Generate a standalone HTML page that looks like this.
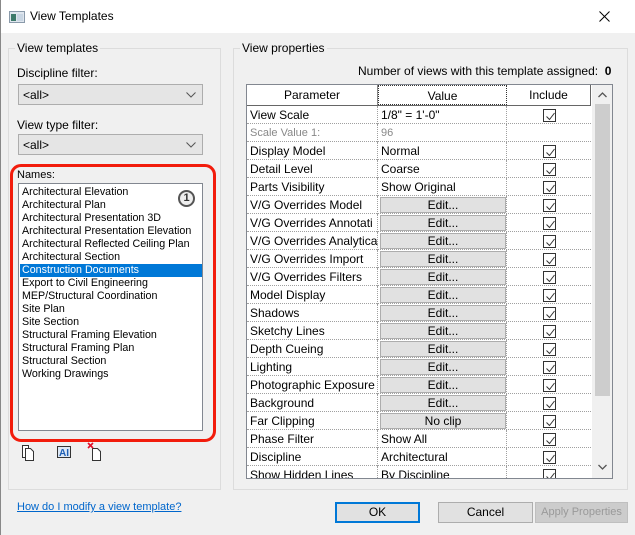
<!DOCTYPE html>
<html><head><style>
*{margin:0;padding:0;box-sizing:border-box}
body{width:635px;height:535px;background:#f0f0f0;font-family:"Liberation Sans",sans-serif;font-size:12px;color:#000;position:relative;overflow:hidden}
.a{position:absolute;white-space:nowrap}
.grp{position:absolute;border:1px solid #dcdcdc}
.lbl{position:absolute;background:#f0f0f0;padding:0 2px}
.combo{position:absolute;background:#e5e5e5;border:1px solid #adadad;height:21px;padding:3px 4px}
.combo svg{position:absolute;right:6px;top:7px}
.li{position:absolute;left:1px;height:13px;line-height:13px;font-size:10.7px;padding-left:2px;width:182px}
.row{position:absolute;left:0;height:18px;width:344px;border-bottom:1px dotted #a0a0a0}
.c{position:absolute;top:0;height:18px;line-height:18px;padding-left:3px}
.c1{left:0;width:131px;border-right:1px dotted #a0a0a0}
.c2{left:131px;width:129px;border-right:1px dotted #a0a0a0}
.c3{left:260px;width:84px}
.btn{position:absolute;left:2px;top:1px;width:126px;height:16px;background:#e1e1e1;border:1px solid #adadad;text-align:center;line-height:14px}
.cb{position:absolute;left:36px;top:3px;width:13px;height:13px;border:1px solid #333;background:#fff}
.cb svg{position:absolute;left:1px;top:1px}
.b{position:absolute;top:502px;height:21px;border:1px solid #adadad;background:#e1e1e1;text-align:center;line-height:19px}
</style></head><body>
<div class="a" style="left:0;top:0;width:635px;height:33px;background:#fff"></div>
<div class="a" style="left:0;top:0;width:1px;height:535px;background:#888"></div>
<svg class="a" style="left:9px;top:11px" width="16" height="12"><rect x="0.5" y="0.5" width="15" height="11" fill="#dfe6ee" stroke="#8a9aaa"/><rect x="2" y="3" width="5" height="7" fill="#3d7a6a"/><rect x="8" y="3" width="6" height="7" fill="#c9d6e3"/></svg>
<div class="a" style="left:30px;top:9px;font-size:12px">View Templates</div>
<svg class="a" style="left:599px;top:11px" width="11" height="11"><path d="M0.5 0.5L10.5 10.5M10.5 0.5L0.5 10.5" stroke="#000" stroke-width="1"/></svg>

<div class="grp" style="left:8px;top:48px;width:213px;height:442px"></div>
<div class="lbl" style="left:15px;top:41px">View templates</div>
<div class="a" style="left:17px;top:66px">Discipline filter:</div>
<div class="combo" style="left:18px;top:84px;width:185px">&lt;all&gt;<svg width="10" height="6"><path d="M0.5 0.5L5 5L9.5 0.5" stroke="#555" fill="none"/></svg></div>
<div class="a" style="left:17px;top:118px">View type filter:</div>
<div class="combo" style="left:18px;top:134px;width:185px">&lt;all&gt;<svg width="10" height="6"><path d="M0.5 0.5L5 5L9.5 0.5" stroke="#555" fill="none"/></svg></div>
<div class="a" style="left:10px;top:164px;width:206px;height:278px;border:3px solid #f21c0c;border-radius:11px"></div>
<div class="a" style="left:17px;top:169px;font-size:11px">Names:</div>
<div class="a" style="left:18px;top:183px;width:185px;height:248px;background:#fff;border:1px solid #828790">
<div class="li" style="top:2px">Architectural Elevation</div>
<div class="li" style="top:15px">Architectural Plan</div>
<div class="li" style="top:28px">Architectural Presentation 3D</div>
<div class="li" style="top:41px">Architectural Presentation Elevation</div>
<div class="li" style="top:54px">Architectural Reflected Ceiling Plan</div>
<div class="li" style="top:67px">Architectural Section</div>
<div class="li" style="top:80px;background:#0078d7;color:#fff">Construction Documents</div>
<div class="li" style="top:93px">Export to Civil Engineering</div>
<div class="li" style="top:106px">MEP/Structural Coordination</div>
<div class="li" style="top:119px">Site Plan</div>
<div class="li" style="top:132px">Site Section</div>
<div class="li" style="top:145px">Structural Framing Elevation</div>
<div class="li" style="top:158px">Structural Framing Plan</div>
<div class="li" style="top:171px">Structural Section</div>
<div class="li" style="top:184px">Working Drawings</div>
</div>
<div class="a" style="left:178px;top:190px;width:17px;height:17px;border:2px solid #555;border-radius:50%;background:#eee;text-align:center;line-height:13px;font-size:11px;font-weight:bold;color:#333">1</div>
<svg class="a" style="left:20px;top:444px" width="20" height="18"><path d="M2.5 1.5H8.5V13.5H2.5Z" fill="#fff" stroke="#333"/><path d="M5.5 4.5H10.5L13.5 7.5V16.5H5.5Z" fill="#fff" stroke="#333"/></svg>
<svg class="a" style="left:56px;top:444px" width="18" height="16"><rect x="1.5" y="2.5" width="13" height="11" fill="#dde8f5" stroke="#333"/><text x="3" y="12" font-family="Liberation Sans" font-size="10" font-weight="bold" fill="#1e5fb4">AI</text></svg>
<svg class="a" style="left:86px;top:442px" width="20" height="20"><path d="M6.5 6.5H11.5L14.5 9.5V18.5H6.5Z" fill="#fff" stroke="#333"/><path d="M2 1L7 6M7 1L2 6" stroke="#e0102a" stroke-width="1.6"/></svg>

<div class="grp" style="left:233px;top:48px;width:395px;height:442px"></div>
<div class="lbl" style="left:240px;top:41px">View properties</div>
<div class="a" style="left:358px;top:64px">Number of views with this template assigned: &nbsp;<b>0</b></div>
<div class="a" style="left:246px;top:84px;width:367px;height:395px;background:#fff;border:1px solid #828790;overflow:hidden">
<div class="a" style="left:0;top:0;width:344px;height:21px;background:#fff;border-bottom:1px solid #666">
<div class="a" style="left:0;top:0;width:131px;height:20px;border-right:1px solid #888;text-align:center;line-height:20px">Parameter</div>
<div class="a" style="left:131px;top:0;width:129px;height:20px;border:1px dotted #333;text-align:center;line-height:20px">Value</div>
<div class="a" style="left:260px;top:0;width:84px;height:20px;border-right:1px solid #666;text-align:center;line-height:20px">Include</div>
</div>
<div class="a" style="left:345px;top:0;width:21px;height:394px;background:#f0f0f0"></div>
<div class="a" style="left:348px;top:19px;width:15px;height:292px;background:#cdcdcd"></div>
<svg class="a" style="left:351px;top:7px" width="9" height="6"><path d="M0.5 5L4.5 1L8.5 5" stroke="#555" fill="none" stroke-width="1.3"/></svg>
<svg class="a" style="left:351px;top:379px" width="9" height="6"><path d="M0.5 1L4.5 5L8.5 1" stroke="#555" fill="none" stroke-width="1.3"/></svg>
<div id="rows"></div>
</div>
<script>
var R=[["View Scale","1/8\" = 1'-0\"",0,1],["Scale Value 1:","96",0,0,1],["Display Model","Normal",0,1],["Detail Level","Coarse",0,1],["Parts Visibility","Show Original",0,1],["V/G Overrides Model","Edit...",1,1],["V/G Overrides Annotati","Edit...",1,1],["V/G Overrides Analytica","Edit...",1,1],["V/G Overrides Import","Edit...",1,1],["V/G Overrides Filters","Edit...",1,1],["Model Display","Edit...",1,1],["Shadows","Edit...",1,1],["Sketchy Lines","Edit...",1,1],["Depth Cueing","Edit...",1,1],["Lighting","Edit...",1,1],["Photographic Exposure","Edit...",1,1],["Background","Edit...",1,1],["Far Clipping","No clip",1,1],["Phase Filter","Show All",0,1],["Discipline","Architectural",0,1],["Show Hidden Lines","By Discipline",0,1]];
var h="";R.forEach(function(r,i){var g=r[4]?"color:#888;font-size:11px;":"";
h+='<div class="row" style="top:'+(21+i*18)+'px"><div class="c c1" style="'+g+'">'+r[0]+'</div><div class="c c2" style="'+g+'">'+(r[2]?'<div class="btn">'+r[1]+'</div>':r[1])+'</div><div class="c c3">'+(r[3]?'<div class="cb"><svg width="11" height="11"><path d="M1.5 5.5L4.5 8.5L9.5 2" stroke="#333" fill="none"/></svg></div>':'')+'</div></div>';});
document.getElementById("rows").innerHTML=h;
</script>
<div class="a" style="left:17px;top:501px;color:#0066cc;text-decoration:underline;font-size:11px">How do I modify a view template?</div>
<div class="b" style="left:335px;width:85px;border:2px solid #0078d7;line-height:17px">OK</div>
<div class="b" style="left:438px;width:95px">Cancel</div>
<div class="b" style="left:535px;width:93px;color:#999;background:#ccc;border-color:#bfbfbf;font-size:11px">Apply Properties</div>
</body></html>
